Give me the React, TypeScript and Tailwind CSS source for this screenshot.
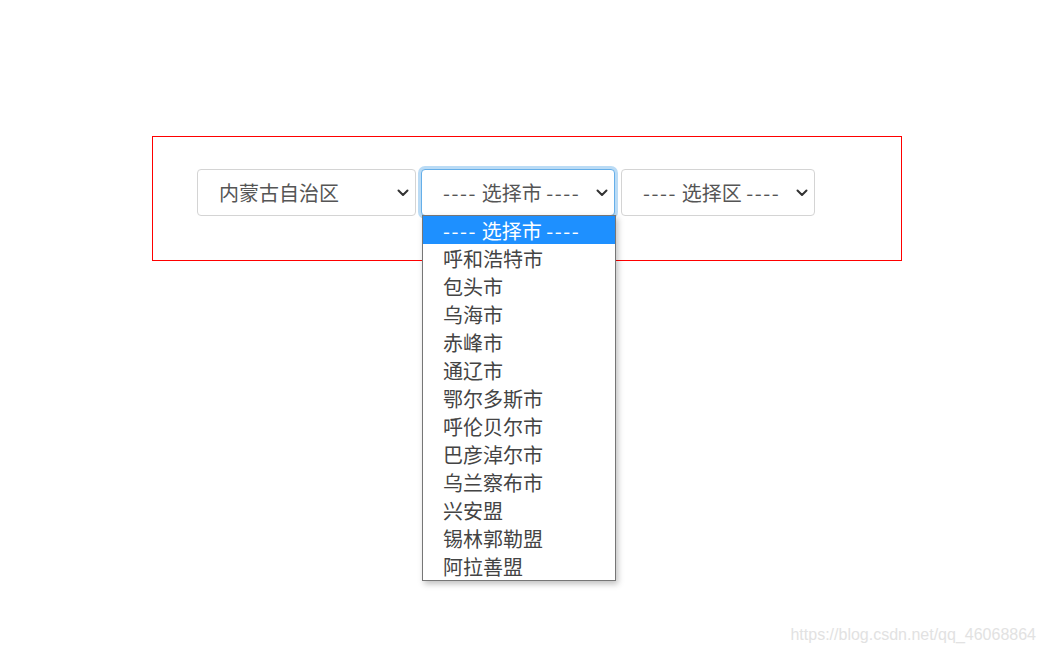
import { useState } from "react";

const cities = [
  "---- 选择市 ----",
  "呼和浩特市",
  "包头市",
  "乌海市",
  "赤峰市",
  "通辽市",
  "鄂尔多斯市",
  "呼伦贝尔市",
  "巴彦淖尔市",
  "乌兰察布市",
  "兴安盟",
  "锡林郭勒盟",
  "阿拉善盟",
];

const font = { fontFamily: '"Microsoft YaHei", "Noto Sans CJK SC", sans-serif' };

// dashes in YaHei are wider than in Noto, so space them out a little
function Label({ text }: { text: string }) {
  const parts = text.split(/(-+)/);
  return (
    <span className="whitespace-pre leading-none">
      {parts.map((p, i) =>
        p.startsWith("-") ? (
          <span key={i} className="tracking-[1.6px]">
            {p}
          </span>
        ) : (
          <span key={i}>{p}</span>
        )
      )}
    </span>
  );
}

function Chevron() {
  return (
    <svg width="12" height="8" viewBox="0 0 12 8" className="shrink-0">
      <path d="M1.5 1.5 L6 6 L10.5 1.5" fill="none" stroke="#333" strokeWidth="2" strokeLinecap="round" strokeLinejoin="round" />
    </svg>
  );
}

function FakeSelect({ label, width, focused }: { label: string; width: string; focused?: boolean }) {
  return (
    <div
      className={`${width} h-[47px] flex items-center justify-between pl-[21px] pr-[6px] rounded-[4px] bg-white text-[20px] text-[#555] ${
        focused
          ? "border border-[#66afe9] shadow-[0_0_0_3px_rgba(102,175,233,0.45)]"
          : "border border-[#d4d4d4]"
      }`}
    >
      <Label text={label} />
      <Chevron />
    </div>
  );
}

export default function App() {
  const [active] = useState(0);

  return (
    <div className="relative w-[1045px] h-[657px] bg-white" style={font}>
      <div className="ml-[152px] pt-[136px]">
        <div className="w-[750px] h-[125px] border border-[#ff0000] pl-[44px] pt-[32px]">
          <div className="flex items-start gap-[5px]">
            <FakeSelect label="内蒙古自治区" width="w-[219px]" />
            <div className="relative">
              <FakeSelect label="---- 选择市 ----" width="w-[194px]" focused />
              {/* open dropdown list */}
              <div className="absolute left-[1px] top-[46px] z-10 w-[194px] border border-[#767676] bg-white shadow-[2px_3px_6px_rgba(0,0,0,0.25)]">
                {cities.map((c, i) => (
                  <div
                    key={c}
                    className={`h-[28px] flex items-center pl-[20px] pt-[2px] text-[20px] leading-none ${
                      i === active ? "bg-[#1e90ff] text-white" : "text-[#444]"
                    }`}
                  >
                    <Label text={c} />
                  </div>
                ))}
              </div>
            </div>
            <div className="ml-[1px]">
              <FakeSelect label="---- 选择区 ----" width="w-[194px]" />
            </div>
          </div>
        </div>
      </div>
      <div
        className="absolute right-[9px] bottom-[10px] text-[16px] text-[#e2e2e2]"
        style={{ fontFamily: '"Liberation Sans", Arial, sans-serif' }}
      >
        https://blog.csdn.net/qq_46068864
      </div>
    </div>
  );
}
